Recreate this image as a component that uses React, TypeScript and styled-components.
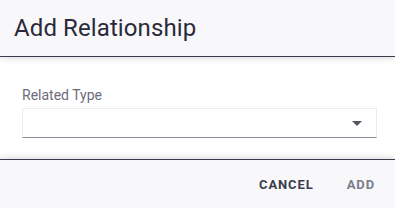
import React from 'react';
import styled, { createGlobalStyle } from 'styled-components';

const GlobalStyle = createGlobalStyle`
    html, body {
        margin: 0;
        padding: 0;
        background: #ffffff;
        font-family: Roboto, "Liberation Sans", sans-serif;
    }
`;

const Dialog = styled.div`
    width: 395px;
    height: 208px;
    display: flex;
    flex-direction: column;
    background: #ffffff;
    overflow: hidden;
`;

const Header = styled.div`
    height: 57px;
    flex-shrink: 0;
    display: flex;
    align-items: center;
    padding: 0 14px;
    box-sizing: border-box;
    background: #f8f8fa;
    border-bottom: 1px solid #3c3c4c;
    box-shadow: 0 2px 6px rgba(0, 0, 0, 0.12);
    position: relative;
    z-index: 1;
`;

const Title = styled.h2`
    margin: 0;
    font-size: 24px;
    font-weight: 400;
    color: #2a2a3a;
    letter-spacing: 0.1px;
`;

const Body = styled.div`
    flex: 1;
    padding: 30px 18px 0 22px;
    box-sizing: border-box;
`;

const Label = styled.div`
    font-size: 14px;
    color: #6c6c7a;
    line-height: 16px;
    margin-bottom: 5px;
`;

const Select = styled.div`
    height: 30px;
    box-sizing: border-box;
    border: 1px solid #ececef;
    border-bottom: 1px solid #8c8c98;
    display: flex;
    align-items: center;
    justify-content: flex-end;
    padding-right: 14px;
`;

const Caret = styled.div`
    width: 0;
    height: 0;
    border-left: 5px solid transparent;
    border-right: 5px solid transparent;
    border-top: 5px solid #55555f;
`;

const Footer = styled.div`
    height: 49px;
    flex-shrink: 0;
    display: flex;
    align-items: center;
    justify-content: flex-end;
    gap: 33px;
    padding: 0 20px 0 0;
    box-sizing: border-box;
    background: #f8f8fa;
    border-top: 1px solid #3c3c4c;
    box-shadow: 0 -2px 6px rgba(0, 0, 0, 0.12);
`;

const Button = styled.button<{ $disabled?: boolean }>`
    background: none;
    border: none;
    padding: 0;
    font-family: Roboto, "Liberation Sans", sans-serif;
    font-size: 13px;
    font-weight: 700;
    letter-spacing: 0.9px;
    color: ${p => (p.$disabled ? '#7c7c8a' : '#3c3c4c')};
    cursor: pointer;
`;

export default function App() {
    return (
        <>
            <GlobalStyle />
            <Dialog>
                <Header>
                    <Title>Add Relationship</Title>
                </Header>
                <Body>
                    <Label>Related Type</Label>
                    <Select>
                        <Caret />
                    </Select>
                </Body>
                <Footer>
                    <Button>CANCEL</Button>
                    <Button $disabled>ADD</Button>
                </Footer>
            </Dialog>
        </>
    );
}
